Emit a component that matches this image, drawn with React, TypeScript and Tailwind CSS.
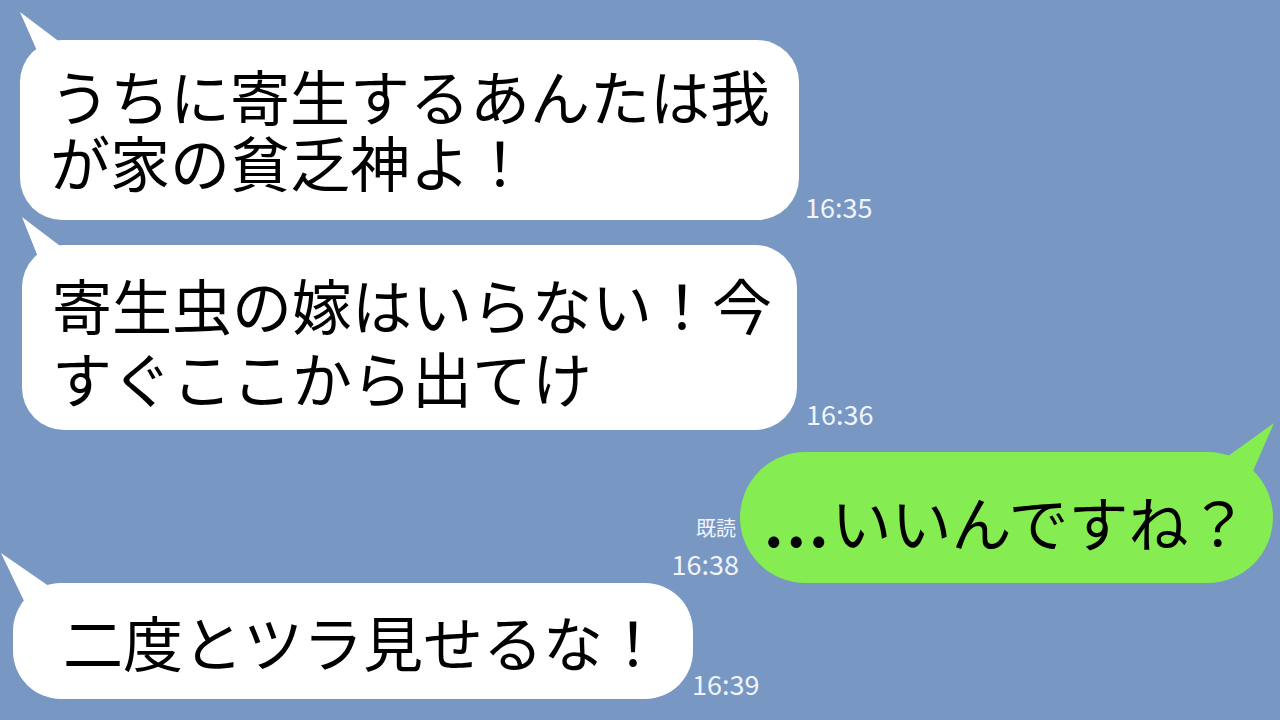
const font = { fontFamily: '"Noto Sans CJK JP", "Noto Sans", sans-serif' };

function Stamp({ time, read }: { time: string; read?: boolean }) {
  return (
    <div className="flex flex-col items-end text-[#f1f5fb]">
      {read && <span className="text-[20px] leading-none mb-[12px] mr-[3px]">既読</span>}
      <span className="text-[27px] leading-none">{time}</span>
    </div>
  );
}

export default function App() {
  return (
    <div className="w-[1280px] h-[720px] overflow-hidden bg-[#7897c2] flex flex-col text-black" style={font}>
      {/* 1 */}
      <div className="flex items-end mt-[40px] pl-[20px]">
        <div className="relative w-[779px] h-[180px] bg-white rounded-[42px] pl-[30px] pt-[22px] text-[60px] leading-[66px]">
          <svg className="absolute left-0 top-[-28px]" width="50" height="50" viewBox="0 0 50 50">
            <polygon points="0,0 18,41 45,34" fill="#fff" />
          </svg>
          <p className="relative">うちに寄生するあんたは我</p>
          <p className="relative">が家の貧乏神よ！</p>
        </div>
        <div className="ml-[6px]">
          <Stamp time="16:35" />
        </div>
      </div>

      {/* 2 */}
      <div className="flex items-end mt-[25px] pl-[22px]">
        <div className="relative w-[775px] h-[185px] bg-white rounded-[42px] pl-[30px] pt-[22px] text-[60px] leading-[73px]">
          <svg className="absolute left-0 top-[-28px]" width="50" height="50" viewBox="0 0 50 50">
            <polygon points="0,0 18,45 46,35" fill="#fff" />
          </svg>
          <p className="relative">寄生虫の嫁はいらない！今</p>
          <p className="relative">すぐここから出てけ</p>
        </div>
        <div className="ml-[9px] mb-[3px]">
          <Stamp time="16:36" />
        </div>
      </div>

      {/* 3 */}
      <div className="flex items-end justify-end mt-[22px] pr-[7px]">
        <div className="mr-[1px] mb-[6px]">
          <Stamp time="16:38" read />
        </div>
        <div className="relative w-[533px] h-[131px] bg-[#85ed51] rounded-full pl-[24px] pt-[6px] flex items-center text-[60px] leading-[60px]">
          <svg className="absolute right-[-6px] top-[-29px]" width="51" height="50" viewBox="0 0 51 50">
            <polygon points="46,0 0,33 25,48" fill="#85ed51" />
          </svg>
          <p className="relative">
            <span className="tracking-[3px] font-bold">...</span>いいんですね？
          </p>
        </div>
      </div>

      {/* 4 */}
      <div className="flex items-end pl-[13px]">
        <div className="relative w-[680px] h-[116px] bg-white rounded-[48px] pl-[50px] flex items-center text-[60px] leading-[60px]">
          <svg className="absolute left-[-12px] top-[-30px]" width="60" height="55" viewBox="0 0 60 55">
            <polygon points="0,0 24,50 55,38" fill="#fff" />
          </svg>
          <p className="relative">二度とツラ見せるな！</p>
        </div>
        <div className="ml-[-1px] mb-[2px]">
          <Stamp time="16:39" />
        </div>
      </div>
    </div>
  );
}
